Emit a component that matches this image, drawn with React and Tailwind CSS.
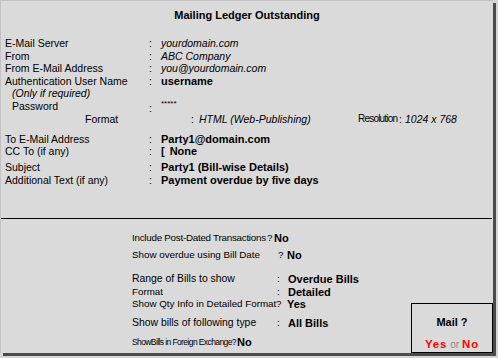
import React from 'react';

const FONT = { fontFamily: '"Liberation Sans", Arial, sans-serif' };

function Row({ label, value, kind = 'italic', className = '' }) {
  const valueClass =
    kind === 'bold' ? 'font-bold text-[11px]' : 'italic text-[10.5px]';
  return (
    <div className={'grid grid-cols-[144px_12px_1fr] h-[12px] leading-[12px] whitespace-nowrap ' + className}>
      <span>{label}</span>
      <span>:</span>
      <span className={valueClass}>{value}</span>
    </div>
  );
}

function Opt({ label, labelW, markW, mark, value, className = '', labelClass = '' }) {
  return (
    <div className={'flex h-[12px] leading-[12px] whitespace-nowrap ' + className}>
      <span className={'shrink-0 ' + labelClass} style={{ width: labelW }}>{label}</span>
      <span className="shrink-0" style={{ width: markW }}>{mark}</span>
      <span className="font-bold text-[11px]">{value}</span>
    </div>
  );
}

export default function App() {
  return (
    <div className="w-[498px] h-[358px] bg-[#d5d5d5] text-black text-[10.5px]" style={FONT}>
      <div className="w-[493px] h-[353px] box-border bg-[#dadada] border-t border-l border-[#c2c2c2] shadow-[3px_3px_0_#4a4a4a] flex flex-col">
        {/* Title */}
        <div className="pt-[8px] h-[20px] leading-[12px] text-center font-bold text-[11px]">
          Mailing Ledger Outstanding
        </div>

        {/* Mail settings */}
        <div className="pl-[4px] mt-[16px]">
          <Row label="E-Mail Server" value="yourdomain.com" />
          <Row label="From" value="ABC Company" className="mt-[1px]" />
          <Row label="From E-Mail Address" value="you@yourdomain.com" />
          <Row label="Authentication User Name" value="username" kind="bold" className="mt-[1px]" />
          <div className="h-[12px] leading-[12px] pl-[7px] italic">(Only if required)</div>
          <div className="grid grid-cols-[144px_12px_1fr] h-[13px] leading-[12px] mt-[1px]">
            <span className="pl-[7px]">Password</span>
            <span className="pt-[2px]">:</span>
            <span className="text-[8px] leading-[8px]">*****</span>
          </div>
          <div className="flex h-[12px] leading-[12px] whitespace-nowrap">
            <span className="pl-[80px] w-[186px] shrink-0">Format</span>
            <span className="w-[8px] shrink-0">:</span>
            <span className="italic w-[159px] shrink-0">HTML (Web-Publishing)</span>
            <span className="w-[41px] shrink-0 text-[10px] tracking-[-0.8px]">Resolution</span>
            <span className="w-[6px] shrink-0">:</span>
            <span className="italic">1024 x 768</span>
          </div>

          <Row label="To E-Mail Address" value="Party1@domain.com" kind="bold" className="mt-[8px]" />
          <div className="grid grid-cols-[144px_12px_1fr] h-[12px] leading-[12px] whitespace-nowrap">
            <span>CC To (if any)</span>
            <span>:</span>
            <span className="font-bold text-[11px]">
              [<span className="ml-[5px]">None</span>
            </span>
          </div>
          <Row label="Subject" value="Party1 (Bill-wise Details)" kind="bold" className="mt-[4px]" />
          <Row label="Additional Text (if any)" value="Payment overdue by five days" kind="bold" className="mt-[1px]" />
        </div>

        <div className="mt-[32px] h-px bg-black mr-[1px]" />

        {/* Report options */}
        <div className="flex-1 flex justify-between text-[9.8px]">
          <div className="pl-[131px] pt-[13px]">
            <Opt label="Include Post-Dated Transactions" labelW={135} mark="?" markW={7} value="No" labelClass="tracking-[-0.25px]" />
            <Opt label="Show overdue using Bill Date" labelW={146} mark="?" markW={9} value="No" className="mt-[5px]" />
            <Opt label="Range of Bills to show" labelW={145} mark=":" markW={11} value="Overdue Bills" className="mt-[12px]" labelClass="text-[10.4px]" />
            <Opt label="Format" labelW={145} mark=":" markW={11} value="Detailed" className="mt-[1px]" />
            <Opt label="Show Qty Info in Detailed Format" labelW={144} mark="?" markW={11} value="Yes" />
            <Opt label="Show bills of following type" labelW={145} mark=":" markW={11} value="All Bills" className="mt-[7px]" labelClass="text-[10.4px]" />
            <div className="flex items-center h-[12px] leading-[12px] whitespace-nowrap mt-[7px]">
              <span className="w-[105px] shrink-0 text-[8.5px] tracking-[-0.6px]">ShowBills in Foreign Exchange?</span>
              <span className="font-bold text-[11px]">No</span>
            </div>
          </div>

          <div className="self-end w-[82px] h-[50px] box-border border border-black flex flex-col items-center">
            <div className="mt-[12px] leading-[12px] font-bold text-[11px]">Mail ?</div>
            <div className="mt-[9px] leading-[14px] whitespace-nowrap">
              <span className="font-bold text-[11.5px] text-[#ff0000] tracking-[0.8px]">Yes</span>
              <span className="text-[10px] text-[#8a8a8a] mx-[3px]">or</span>
              <span className="font-bold text-[11.5px] text-[#ff0000] tracking-[0.8px]">No</span>
            </div>
          </div>
        </div>
      </div>
    </div>
  );
}
